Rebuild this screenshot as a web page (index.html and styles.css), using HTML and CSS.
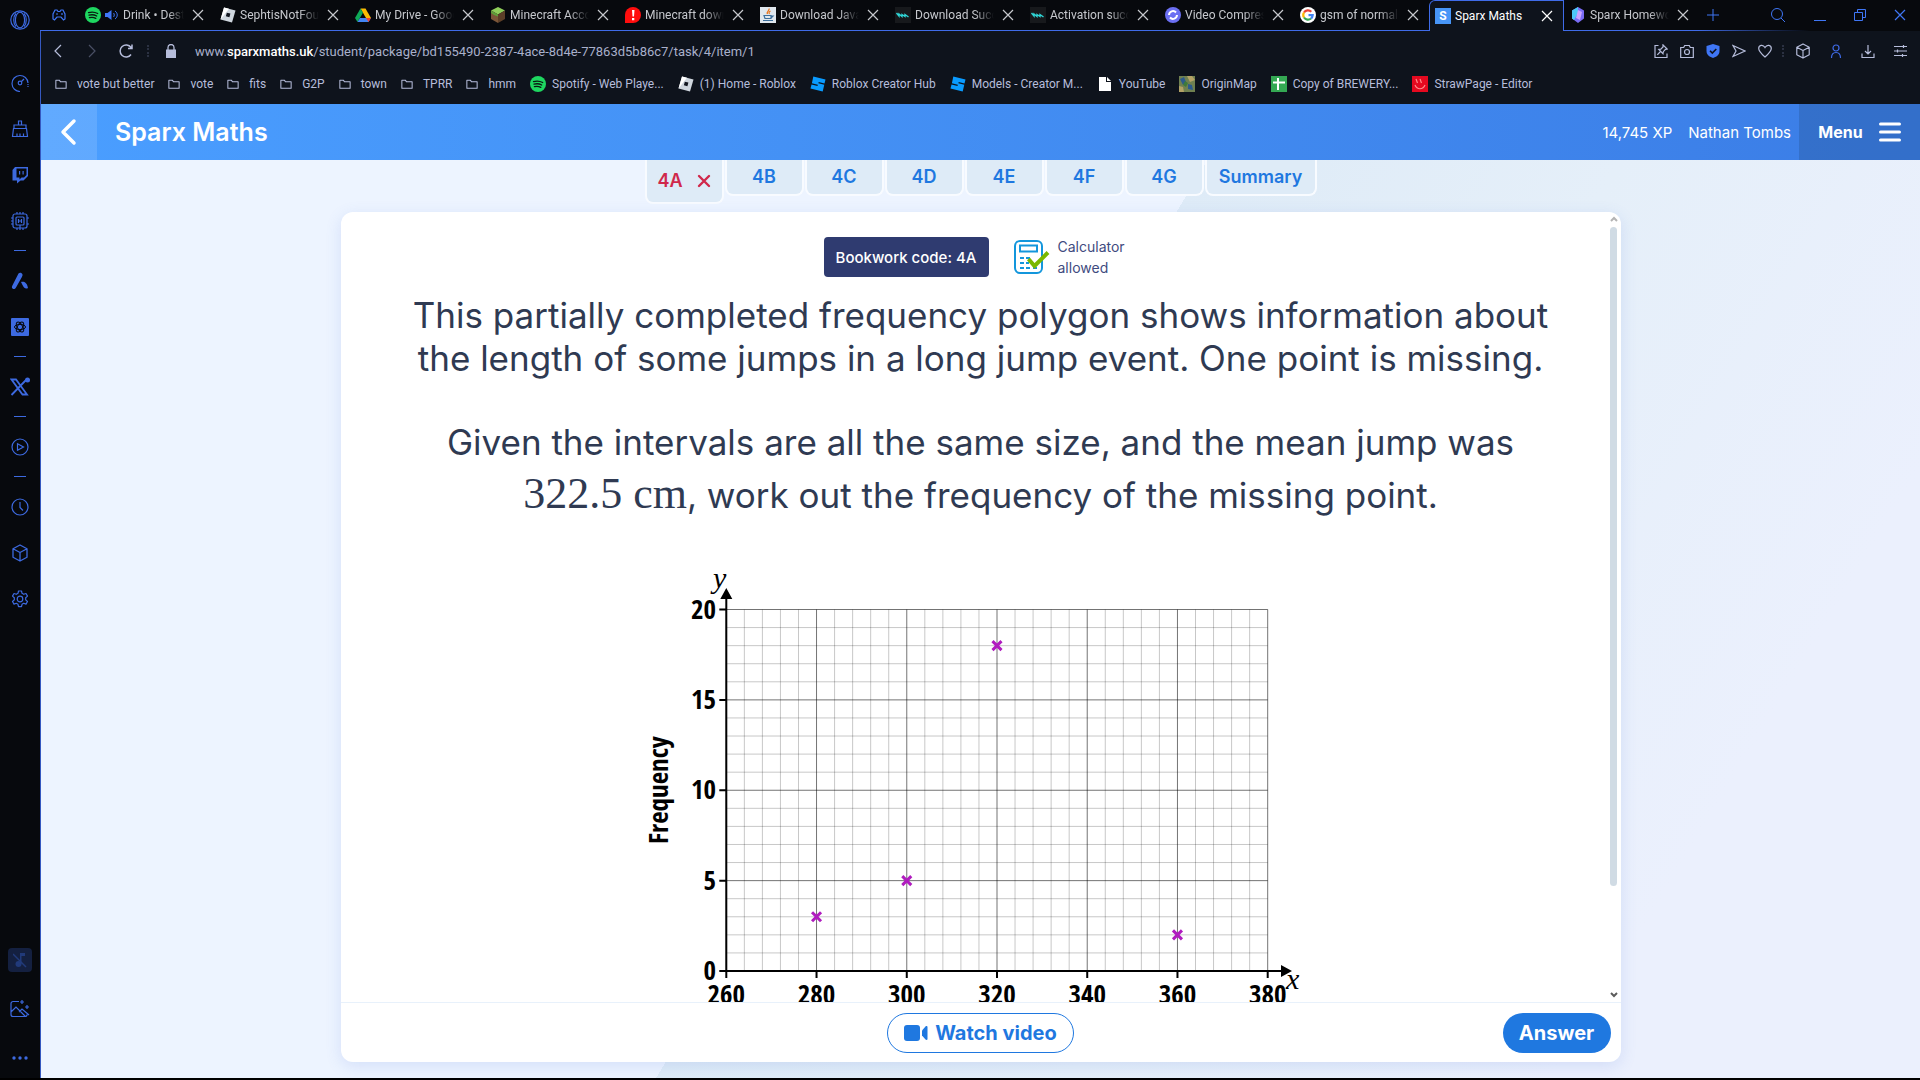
FILE: index.html
```html
<!DOCTYPE html>
<html lang="en">
<head>
<meta charset="UTF-8">
<meta name="viewport" content="width=device-width, initial-scale=1.0">
<title>Sparx Maths</title>
<link rel="stylesheet" href="styles.css">
</head>
<body>

<!-- shared icons -->
<svg class="defs" width="0" height="0">
  <symbol id="close" viewBox="0 0 12 12"><path d="M1 1l10 10M11 1L1 11" fill="none" stroke="currentColor" stroke-width="1.2"/></symbol>
  <symbol id="folder" viewBox="0 0 14 12"><path d="M1 1.500h4l1.500 2h6.500v7.500h-12z" fill="none" stroke="currentColor" stroke-width="1.200" stroke-linejoin="round"/></symbol>
  <symbol id="spotify" viewBox="0 0 16 16"><circle cx="8" cy="8" r="8" fill="#1ed760"/><path d="M3.500 5.600c3-.9 6.500-.6 9.200.9M4 8.200c2.600-.8 5.400-.5 7.700.8M4.400 10.700c2.200-.6 4.500-.4 6.400.7" fill="none" stroke="#0a1a10" stroke-width="1.300" stroke-linecap="round"/></symbol>
  <symbol id="roblox" viewBox="0 0 16 16"><path d="M4 0.500L15.500 3.500 12 15.500 0.500 12.500z" fill="#cfd6de"/><path d="M0.500 12.500L4 .5l5 1.300z" fill="#fff"/><path d="M6.800 5.700l3.600.9-1 3.600-3.500-.9z" fill="#12161f"/></symbol>
  <symbol id="creator" viewBox="0 0 16 16"><path d="M3.300 0.500L15.500 3.500l-1 4-5.800-1.500-.3 1.200 5.900 1.600-1.600 6.700L.5 12.500l1-4 6 1.500.3-1.200-5.900-1.600z" fill="#0a9bff"/></symbol>
  <symbol id="gamemaker" viewBox="0 0 16 16"><rect width="16" height="16" fill="#17191c"/><path d="M1.500 6l2.500 3v-2l3 2.500v-2l3 2v-2l3.500 2.500" fill="none" stroke="#2fd6d6" stroke-width="1.400"/></symbol>
  <symbol id="cube" viewBox="0 0 18 18"><path d="M9 1l7 3.800v8.400L9 17l-7-3.800V4.800zM2 4.800l7 3.700 7-3.700M9 8.500V17" fill="none" stroke="currentColor" stroke-width="1.300" stroke-linejoin="round"/></symbol>
</svg>

<div class="window">
  <aside class="sidebar">
    <button class="opera" aria-label="Opera menu"><svg width="20" height="20" viewBox="0 0 20 20"><circle cx="10" cy="10" r="9.200"/><ellipse cx="10" cy="10" rx="4.600" ry="7.800"/><path d="M6 3.500c-3 3-3 10 0 13M14 3.500c3 3 3 10 0 13"/></svg></button>
    <nav class="tools">
      <button aria-label="GX Control"><svg width="18" height="18" viewBox="0 0 18 18"><path d="M9 17.500A8 8 0 1 1 17 9"/><circle cx="9" cy="9" r="1.800"/><path d="M10.500 7.500l2.500-2.500"/><path d="M17 10v4" stroke-dasharray="1 1"/></svg></button>
      <button aria-label="GX Cleaner"><svg width="18" height="18" viewBox="0 0 18 18"><path d="M3 8V5h12v3M7.500 5V1h3v4M2.500 8.500h13l1 8h-15zM6 16.500v-3M9 16.500v-3M12.500 16.500v-3"/></svg></button>
      <button aria-label="Twitch"><svg width="18" height="18" viewBox="0 0 18 18"><path class="solid" fill-rule="evenodd" d="M4 1h13v9l-4.500 4.500H9.500L6 17.500v-3H1.500V4zM5.500 2.500v9h3v2l2-2h2.500L15.500 9V2.500zM8 5h1.200v3.500H8zM11.500 5h1.200v3.500h-1.200z"/></svg></button>
      <button aria-label="GX Mods"><svg width="18" height="18" viewBox="0 0 18 18"><rect x="2" y="2" width="14" height="14" rx="2"/><rect x="5" y="5" width="8" height="8" rx="1"/><path d="M7.500 7v4M10.500 7v4M7.500 9h3M6 2V0M9 2V0M12 2V0M6 18v-2M9 18v-5M12 18v-2M0 6h2M0 9h2M0 12h2M18 6h-2M18 12h-2"/></svg></button>
      <i class="dash"></i>
      <button aria-label="Aria"><svg width="18" height="18" viewBox="0 0 18 18"><path class="solid" d="M7.500 1.500C8.500.3 11 .5 11.500 2.500c.2 1-.2 1.700-.6 2.400L5 15.500c-.9 1.600-2.500 2-3.500 1-.9-.8-.7-2 0-3.200zM10 10c2.500-1 6 0 7 6-2.500 1.500-4.500-.5-5.500-3z"/></svg></button>
      <button aria-label="ChatGPT"><svg width="18" height="18" viewBox="0 0 18 18"><rect class="solid" width="18" height="18" rx="1"/><g class="cut"><ellipse cx="9" cy="9" rx="5.500" ry="2.600"/><ellipse cx="9" cy="9" rx="5.500" ry="2.600" transform="rotate(60 9 9)"/><ellipse cx="9" cy="9" rx="5.500" ry="2.600" transform="rotate(120 9 9)"/></g></svg></button>
      <i class="dash"></i>
      <button aria-label="X"><svg width="20" height="20" viewBox="0 0 20 20"><path d="M1.500 2.500h4.500l11 15h-4.500zM16 3L1.500 18" stroke-width="1.800"/><circle class="solid" cx="17.500" cy="3" r="2.500"/></svg></button>
      <i class="dash"></i>
      <button aria-label="Player"><svg width="18" height="18" viewBox="0 0 18 18"><circle cx="9" cy="9" r="8"/><path d="M6.500 5.700l6 3.300-6 3.300z"/></svg></button>
      <i class="dash"></i>
      <button aria-label="History"><svg width="18" height="18" viewBox="0 0 18 18"><circle cx="9" cy="9" r="8"/><path d="M9 4v5.500l3 3"/></svg></button>
      <button aria-label="Extensions"><svg width="18" height="18"><use href="#cube"/></svg></button>
      <button aria-label="Settings"><svg width="18" height="18" viewBox="0 0 18 18"><circle cx="9" cy="9" r="2.800"/><path d="M7.500 1h3l.5 2.300 1.700 1 2.300-.8 1.500 2.600-1.800 1.600v2.200l1.800 1.600-1.500 2.600-2.300-.8-1.700 1-.5 2.300h-3L7 14.300l-1.700-1-2.300.8-1.500-2.600 1.800-1.600V7.700L1.500 6.100 3 3.500l2.300.8 1.700-1z" stroke-linejoin="round"/></svg></button>
    </nav>
    <div class="tools-bottom">
      <button class="muted" aria-label="Music off"><svg width="14" height="16" viewBox="0 0 14 16"><circle class="solid" cx="5.500" cy="12" r="3"/><path class="solid" d="M7 1h5v3H8.500v8H7z"/><path d="M0 2l13 13" stroke-width="1.500"/></svg></button>
      <button aria-label="Image tools"><svg width="20" height="18" viewBox="0 0 20 18"><path d="M9 1.500H3a2 2 0 0 0-2 2v11a2 2 0 0 0 2 2h12a2 2 0 0 0 2-2M1 12l5-5 9 9M9 12l3-3 7 6M12 0v4M10 2h4M17 5v4M15 7h4"/></svg></button>
      <button aria-label="More"><svg width="16" height="4" viewBox="0 0 16 4"><g class="solid"><circle cx="2" cy="2" r="1.700"/><circle cx="8" cy="2" r="1.700"/><circle cx="14" cy="2" r="1.700"/></g></svg></button>
    </div>
  </aside>

  <div class="browser">
    <div class="tabstrip">
      <button class="corner" aria-label="GX Corner"><svg width="14" height="12" viewBox="0 0 14 12" fill="none" stroke="currentColor" stroke-width="1.200"><path d="M3 1h2l1 1.500h2L9 1h2l2 4v5l-1.500 1L9 8H5l-2.500 3L1 10V5z"/><path d="M4 5h2M10 4v2"/></svg></button>
      <div class="tab">
        <svg class="favicon"><use href="#spotify"/></svg>
        <svg class="audio" width="14" height="12" viewBox="0 0 14 12"><path d="M0 4h2.500L6.500 1v10L2.500 8H0z" fill="#3f76f5"/><path d="M8.500 4c1 1 1 3 0 4M10 2c3 2 3 6 0 8" fill="none" stroke="#3f76f5"/></svg>
        <span class="title">Drink • Destiny</span><button class="x" aria-label="Close"><svg><use href="#close"/></svg></button>
      </div>
      <div class="tab"><svg class="favicon"><use href="#roblox"/></svg><span class="title">SephtisNotFound</span><button class="x" aria-label="Close"><svg><use href="#close"/></svg></button></div>
      <div class="tab"><svg class="favicon" viewBox="0 0 16 16"><path d="M5.500 1.500h5L16 11h-5z" fill="#fbbc04"/><path d="M5.500 1.500L0 11l2.500 4L8 5.700z" fill="#0fa958"/><path d="M5 11h11l-2.500 4h-11z" fill="#4285f4"/><path d="M11 11h5l-2.500 4z" fill="#ea4335"/></svg><span class="title">My Drive - Google</span><button class="x" aria-label="Close"><svg><use href="#close"/></svg></button></div>
      <div class="tab"><svg class="favicon" viewBox="0 0 16 16"><path d="M8 0l7 3.500-7 4-7-4z" fill="#8fce5a"/><path d="M1 3.500l7 4V16l-7-4z" fill="#7b5638"/><path d="M15 3.500l-7 4V16l7-4z" fill="#5d3f28"/><path d="M1 3.500l7 4v2L4 8 1 6z" fill="#5f9e3a"/></svg><span class="title">Minecraft Account</span><button class="x" aria-label="Close"><svg><use href="#close"/></svg></button></div>
      <div class="tab"><svg class="favicon" viewBox="0 0 16 16"><path d="M8 0a8 8 0 1 1 0 16H0V8a8 8 0 0 1 8-8z" fill="#ff0d0d"/><path d="M7 3h2.500L9 9.500H7.500zM7 11h2.300v2.200H7z" fill="#fff"/></svg><span class="title">Minecraft download</span><button class="x" aria-label="Close"><svg><use href="#close"/></svg></button></div>
      <div class="tab"><svg class="favicon" viewBox="0 0 16 16"><rect width="16" height="16" fill="#dfe7ee"/><path d="M9 1.500c1 2-3 3-1.500 5.500M10.500 4c-1.500.8-2 1.500-1 3" fill="none" stroke="#e8731a" stroke-width="1.200"/><path d="M4 8.500h7v3H5zM11 9h2l-2 2M3 13.500h10" fill="none" stroke="#3c6f9c" stroke-width="1.200"/></svg><span class="title">Download Java for</span><button class="x" aria-label="Close"><svg><use href="#close"/></svg></button></div>
      <div class="tab"><svg class="favicon"><use href="#gamemaker"/></svg><span class="title">Download Success</span><button class="x" aria-label="Close"><svg><use href="#close"/></svg></button></div>
      <div class="tab"><svg class="favicon"><use href="#gamemaker"/></svg><span class="title">Activation successful</span><button class="x" aria-label="Close"><svg><use href="#close"/></svg></button></div>
      <div class="tab"><svg class="favicon" viewBox="0 0 16 16"><circle cx="8" cy="8" r="8" fill="#6b6ff2"/><path d="M4 8a4 4 0 0 1 7-2.500M12 8a4 4 0 0 1-7 2.500" fill="none" stroke="#fff" stroke-width="2"/></svg><span class="title">Video Compressor</span><button class="x" aria-label="Close"><svg><use href="#close"/></svg></button></div>
      <div class="tab"><svg class="favicon" viewBox="0 0 16 16"><circle cx="8" cy="8" r="8" fill="#fff"/><g fill="none" stroke-width="2.200"><path d="M4 5.500A4.700 4.700 0 0 1 11.300 4.700" stroke="#ea4335"/><path d="M4 5.500a4.700 4.700 0 0 0 0 5" stroke="#fbbc04"/><path d="M4 10.500a4.700 4.700 0 0 0 7 1" stroke="#34a853"/><path d="M11 11.500A4.700 4.700 0 0 0 12.700 8.200H8.500" stroke="#4285f4"/></g></svg><span class="title">gsm of normal a4</span><button class="x" aria-label="Close"><svg><use href="#close"/></svg></button></div>
      <div class="tab active"><svg class="favicon" viewBox="0 0 16 16"><rect width="16" height="16" fill="#4795f7"/><text x="8" y="12" text-anchor="middle" class="favicon-letter">S</text></svg><span class="title">Sparx Maths</span><button class="x" aria-label="Close"><svg><use href="#close"/></svg></button></div>
      <div class="tab"><svg class="favicon" viewBox="0 0 16 16"><path d="M8 0l6 3.500v8L8 16l-6-4.500v-8z" fill="#7a6cf5"/><path d="M2 3.500L8 0v6L4 13l-2-1.500z" fill="#4cc9f7"/><path d="M8 3l4 2-2 8-4-2z" fill="#c9a5ff"/></svg><span class="title">Sparx Homework</span><button class="x" aria-label="Close"><svg><use href="#close"/></svg></button></div>
      <div class="strip-end">
        <button aria-label="New tab"><svg width="12" height="12" viewBox="0 0 12 12"><path d="M6 0v12M0 6h12"/></svg></button>
        <div class="window-buttons">
          <button aria-label="Search tabs"><svg width="16" height="16" viewBox="0 0 16 16"><circle cx="7" cy="7" r="5.500"/><path d="M11 11l4 4"/></svg></button>
          <button aria-label="Minimise"><svg width="12" height="12" viewBox="0 0 12 12"><path d="M0 11.500h12"/></svg></button>
          <button aria-label="Restore"><svg width="12" height="12" viewBox="0 0 12 12"><path d="M.5 3.500h8v8h-8zM3.500 3.500v-3h8v8h-3"/></svg></button>
          <button aria-label="Close window"><svg width="12" height="12"><use href="#close"/></svg></button>
        </div>
      </div>
    </div>

    <div class="view">
      <div class="address-bar">
        <button aria-label="Back"><svg width="8" height="14" viewBox="0 0 8 14"><path d="M7 1L1 7l6 6"/></svg></button>
        <button class="off" aria-label="Forward"><svg width="8" height="14" viewBox="0 0 8 14"><path d="M1 1l6 6-6 6"/></svg></button>
        <button aria-label="Reload"><svg width="14" height="14" viewBox="0 0 14 14"><path d="M12 10.500A6 6 0 1 1 12 3.500M13 .5V4.500H9" stroke-width="1.500"/></svg></button>
        <i class="grip"></i>
        <svg class="lock" width="10" height="14" viewBox="0 0 10 14"><path d="M0 6h10v8H0z" fill="#b6bddb"/><path d="M2 6V3.500a3 3 0 0 1 6 0V6" fill="none" stroke="#b6bddb" stroke-width="1.300"/></svg>
        <span class="url">www.<b>sparxmaths.uk</b>/student/package/bd155490-2387-4ace-8d4e-77863d5b86c7/task/4/item/1</span>
        <div class="page-actions">
          <button aria-label="Pin"><svg width="14" height="14" viewBox="0 0 14 14"><path d="M4.500 1.500H1v12h12V9.500M9 .8l4.200 4.200-1.700.4-2.200 2.300-.3 2L4.800 5.500l2-.3L9 2.900zM6.500 7.500l-3.200 3.300"/></svg></button>
          <button aria-label="Snapshot"><svg width="14" height="14" viewBox="0 0 14 14"><path d="M.7 3.500h3l1-2h4.600l1 2h3v10H.7z"/><circle cx="7" cy="8" r="2.500"/></svg></button>
          <button aria-label="Ad blocker"><svg width="14" height="14" viewBox="0 0 14 14"><path d="M7 0l6.500 2v5c0 4-3.500 6-6.500 7C4 13 .5 11 .5 7V2z" fill="#3f76f5" stroke="none"/><path d="M4 6.800l2.300 2.300L10.300 5" stroke="#0e131c" stroke-width="1.600"/></svg></button>
          <button aria-label="Flow"><svg width="14" height="14" viewBox="0 0 14 14"><path d="M1 1.500l12 5.500-12 5.500L4 7z"/></svg></button>
          <button aria-label="Bookmark"><svg width="14" height="14" viewBox="0 0 14 14"><path d="M7 13C3 9.500.7 7.500.7 4.500 .7 1 5 0 7 3.500 9 0 13.300 1 13.300 4.500c0 3-2.300 5-6.300 8.500z"/></svg></button>
        </div>
        <i class="grip"></i>
        <div class="toolbar-end">
          <button aria-label="Extensions"><svg width="16" height="16"><use href="#cube"/></svg></button>
          <button class="blue" aria-label="Profile"><svg width="12" height="14" viewBox="0 0 12 14"><circle cx="6" cy="4" r="3"/><path d="M1.500 14c0-4 2-5.500 4.500-5.500s4.500 1.500 4.500 5.500"/></svg></button>
          <button aria-label="Downloads"><svg width="14" height="14" viewBox="0 0 14 14"><path d="M7 1v9M4 7l3 3 3-3M1 9.500v4h12v-4"/></svg></button>
          <button aria-label="Easy setup"><svg width="14" height="12" viewBox="0 0 14 12"><path d="M0 1.500h13M0 6h13M0 10.500h13M9.500 0v3M3.500 4.500v3M8.500 9v3"/></svg></button>
        </div>
      </div>

      <nav class="bookmarks">
        <a href="#"><svg class="folder"><use href="#folder"/></svg>vote but better</a>
        <a href="#"><svg class="folder"><use href="#folder"/></svg>vote</a>
        <a href="#"><svg class="folder"><use href="#folder"/></svg>fits</a>
        <a href="#"><svg class="folder"><use href="#folder"/></svg>G2P</a>
        <a href="#"><svg class="folder"><use href="#folder"/></svg>town</a>
        <a href="#"><svg class="folder"><use href="#folder"/></svg>TPRR</a>
        <a href="#"><svg class="folder"><use href="#folder"/></svg>hmm</a>
        <a href="#"><svg class="favicon"><use href="#spotify"/></svg>Spotify - Web Playe...</a>
        <a href="#"><svg class="favicon"><use href="#roblox"/></svg>(1) Home - Roblox</a>
        <a href="#"><svg class="favicon"><use href="#creator"/></svg>Roblox Creator Hub</a>
        <a href="#"><svg class="favicon"><use href="#creator"/></svg>Models - Creator M...</a>
        <a href="#"><svg class="favicon" viewBox="0 0 16 16"><path d="M2 1h7v5h5v9H2z" fill="#fff"/><path d="M10 1l4 4h-4z" fill="#fff"/></svg>YouTube</a>
        <a href="#"><svg class="favicon" viewBox="0 0 16 16"><rect width="16" height="16" fill="#6f8050"/><path d="M1 3l4-2 2 5-3 3zM9 8l4 1 1 5-5-1z" fill="#2c5a8c"/><path d="M8 0h5l3 4-5 2zM0 10l4 1 1 5H0z" fill="#b3a266"/><path d="M6 5l3 2-2 4-3-2z" fill="#3e7a3a"/></svg>OriginMap</a>
        <a href="#"><svg class="favicon" viewBox="0 0 16 16"><rect width="16" height="16" fill="#34a853"/><path d="M2 6.500h12M7 2v12" fill="none" stroke="#fff" stroke-width="2"/></svg>Copy of BREWERY...</a>
        <a href="#"><svg class="favicon" viewBox="0 0 16 16"><rect width="16" height="16" fill="#e5091f"/><path d="M4 3l1.500 4M8 3l1.500 4M3 9c2 5 8 5 10 0" fill="none" stroke="#ff8b8b" stroke-width="1.200"/></svg>StrawPage - Editor</a>
      </nav>

      <header class="app-header">
        <button class="back" aria-label="Back"><svg width="18" height="28" viewBox="0 0 18 28"><path d="M14 3L3 14l11 11" fill="none" stroke="#fff" stroke-width="3.500" stroke-linecap="round" stroke-linejoin="round"/></svg></button>
        <h1>Sparx Maths</h1>
        <span class="xp">14,745 XP</span>
        <span class="user">Nathan Tombs</span>
        <button class="menu">Menu <svg width="22" height="20" viewBox="0 0 22 20"><path d="M1.500 2h19M1.500 10h19M1.500 18h19" stroke="#fff" stroke-width="3" stroke-linecap="round"/></svg></button>
      </header>

      <main class="page">
        <nav class="task-items">
          <a href="#" class="wrong">4A <svg width="14" height="14" viewBox="0 0 14 14"><path d="M2 2l10 10M12 2L2 12" stroke="#d0284b" stroke-width="2.400" stroke-linecap="round"/></svg></a>
          <a href="#">4B</a>
          <a href="#">4C</a>
          <a href="#">4D</a>
          <a href="#">4E</a>
          <a href="#">4F</a>
          <a href="#">4G</a>
          <a href="#" class="summary">Summary</a>
        </nav>

        <section class="card">
          <div class="question">
            <div class="info">
              <button class="bookwork">Bookwork code: 4A</button>
              <div class="calculator">
                <svg width="36" height="34" viewBox="0 0 36 34"><rect x="1" y="1" width="27" height="32" rx="5" fill="none" stroke="#1396dc" stroke-width="2"/><rect x="6" y="5.500" width="17" height="6" fill="none" stroke="#1396dc" stroke-width="2"/><path d="M6 18h4M12 18h4M6 23h4M12 23h3M6 28h4M12 28h4M19 28h4" stroke="#1396dc" stroke-width="2"/><path d="M14.500 19l6 7L34 12.500" fill="none" stroke="#7ab800" stroke-width="4"/></svg>
                <span>Calculator<br>allowed</span>
              </div>
            </div>
            <p>This partially completed frequency polygon shows information about<br>the length of some jumps in a long jump event. One point is missing.</p>
            <p class="given">Given the intervals are all the same size, and the mean jump was<br><span class="math">322.5 cm</span>, work out the frequency of the missing point.</p>
            <svg class="chart" id="chart" width="680" height="460" viewBox="0 0 680 460"></svg>
          </div>
          <div class="scrollbar">
            <svg width="8" height="6" viewBox="0 0 8 6"><path d="M1 5l3-3 3 3" fill="none" stroke="#b4b4b4" stroke-width="2"/></svg>
            <i class="thumb"></i>
            <svg width="8" height="6" viewBox="0 0 8 6"><path d="M1 1l3 3 3-3" fill="none" stroke="#5c5c5c" stroke-width="2"/></svg>
          </div>
          <footer>
            <button class="watch"><svg width="24" height="18" viewBox="0 0 24 18"><rect x="0" y="1" width="16" height="16" rx="3" fill="#1f78e0"/><path d="M18 6.500L21.500 2.500c1-.8 2-.5 2 .5v12c0 1-1 1.300-2 .5L18 11.500z" fill="#1f78e0"/></svg>Watch video</button>
            <button class="answer">Answer</button>
          </footer>
        </section>
      </main>
    </div>
  </div>
</div>

<script>
const points = [[280, 3], [300, 5], [320, 18], [360, 2]];
const left = 85.3, right = 626.7, top_ = 49.5, bottom = 411;

const px = x => left + (x - 260) / 120 * (right - left);
const py = y => bottom - y / 20 * (bottom - top_);

let minor = "", major = "", ticks = "", labels = "";

for (let x = 260; x <= 380; x += 4) {
  const d = `M${px(x)} ${top_}V${bottom}`;
  if (x % 20 == 0) major += d; else minor += d;
}
for (let y = 0; y <= 20; y++) {
  const d = `M${left} ${py(y)}H${right}`;
  if (y % 5 == 0) major += d; else minor += d;
}
for (let x = 260; x <= 380; x += 20) {
  ticks += `M${px(x)} ${bottom}v7`;
  labels += `<text x="${px(x)}" y="444" text-anchor="middle">${x}</text>`;
}
for (let y = 0; y <= 20; y += 5) {
  ticks += `M${left} ${py(y)}h-7`;
  labels += `<text x="75" y="${py(y) + 9}" text-anchor="end">${y}</text>`;
}

const crosses = points.map(([x, y]) => `M${px(x) - 4.5} ${py(y) - 4.5}l9 9m0 -9l-9 9`).join("");

document.getElementById("chart").innerHTML = `
  <path class="minor" d="${minor}"/>
  <path class="major" d="${major}"/>
  <path class="axis" d="M${left} ${bottom}V36M${left} ${bottom}H642${ticks}"/>
  <path d="M${left - 6} 39h12l-6 -11zM640 ${bottom - 6}v12l11 -6z"/>
  <path class="cross" d="${crosses}"/>
  ${labels}
  <text transform="translate(27 284) rotate(-90)">Frequency</text>
  <text class="var" x="72" y="28">y</text>
  <text class="var" x="645" y="429">x</text>`;
</script>
</body>
</html>
```

FILE: styles.css
```css
* {
  box-sizing: border-box;
}

body {
  margin: 0;
  background-color: #000;
  font-family: Inter, "Open Sans", sans-serif;
}

button {
  display: flex;
  align-items: center;
  justify-content: center;
  padding: 0;
  border: none;
  background: none;
  color: inherit;
  font-family: inherit;
  cursor: pointer;
}

a {
  text-decoration: none;
}

.defs {
  position: absolute;
}

.window {
  display: flex;
  height: 100vh;
  border-bottom: 2px solid #000;
  background-color: #07090d;
}

/* sidebar */
.sidebar {
  display: flex;
  flex-direction: column;
  flex: none;
  width: 40px;
  color: #3d6ae0;
}

.sidebar svg {
  fill: none;
  stroke: currentColor;
  stroke-width: 1.2;
}

.sidebar .solid {
  fill: currentColor;
  stroke: none;
}

.sidebar .cut {
  stroke: #07090d;
  stroke-width: 1;
}

.opera {
  height: 40px;
  margin-bottom: 20px;
}

.tools button {
  width: 40px;
  height: 46px;
}

.dash {
  display: block;
  width: 12px;
  height: 1px;
  margin: 6px 14px 7px;
  background-color: currentColor;
}

.tools-bottom {
  display: flex;
  flex-direction: column;
  gap: 9px;
  margin-top: auto;
}

.tools-bottom button {
  height: 40px;
}

.tools-bottom .muted {
  height: 24px;
  width: 24px;
  margin: 8px;
  border-radius: 4px;
  background-color: #142040;
  color: #213a7a;
}

/* tabs */
.browser {
  display: flex;
  flex-direction: column;
  flex: 1;
  min-width: 0;
}

.tabstrip {
  display: flex;
  flex: none;
  height: 31px;
  color: #3f76f5;
}

.corner {
  flex: none;
  width: 39px;
  padding-right: 2px;
  border-bottom: 1px solid #3f6be8;
}

.tab {
  display: flex;
  align-items: center;
  flex: none;
  width: 135px;
  padding: 0 10px 0 6px;
  border-bottom: 1px solid #3f6be8;
  color: #c6c8cd;
  font-family: Roboto, sans-serif;
  font-size: 12px;
}

.favicon {
  flex: none;
  width: 16px;
  height: 16px;
}

.favicon-letter {
  fill: #fff;
  font-size: 12px;
  font-weight: 700;
}

.audio {
  flex: none;
  margin-left: 4px;
}

.title {
  flex: 1;
  margin-left: 4px;
  margin-right: 8px;
  overflow: hidden;
  white-space: nowrap;
  mask-image: linear-gradient(to right, #000 75%, transparent);
}

.x svg {
  width: 12px;
  height: 12px;
}

.tab.active {
  border: 1px solid #3f6be8;
  border-bottom: none;
  border-radius: 6px 0 0 0;
  padding-left: 5px;
  background-color: #0e131c;
  color: #fff;
}

.active .title {
  mask-image: none;
}

.strip-end {
  display: flex;
  align-items: center;
  justify-content: space-between;
  flex: 1;
  padding: 0 14px 0 8px;
  border-bottom: 1px solid;
  border-image: linear-gradient(to right, #3f6be8, transparent 50%) 1;
}

.strip-end svg {
  fill: none;
  stroke: currentColor;
}

.window-buttons {
  display: flex;
  align-items: center;
  gap: 28px;
}

/* toolbar */
.view {
  display: flex;
  flex-direction: column;
  flex: 1;
  min-height: 0;
  border-left: 1px solid #3558c0;
  background-color: #0e131c;
}

.address-bar {
  display: flex;
  align-items: center;
  height: 40px;
  padding: 0 12px 0 4px;
  color: #b6bddb;
}

.address-bar svg {
  fill: none;
  stroke: currentColor;
  stroke-width: 1.2;
}

.address-bar > button {
  width: 26px;
  margin-right: 8px;
}

.address-bar .off {
  color: #4a5065;
}

.grip {
  width: 2px;
  height: 12px;
  border-left: 2px dotted #2b3142;
}

.lock {
  margin: 0 19px 0 17px;
}

.url {
  flex: 1;
  font-family: Roboto, sans-serif;
  font-size: 13px;
  color: #a9b0cb;
}

.url b {
  font-weight: 500;
  color: #fff;
}

.page-actions {
  display: flex;
  gap: 12px;
  margin-right: 10px;
}

.toolbar-end {
  display: flex;
  align-items: center;
  gap: 19px;
  margin-left: 11px;
}

.blue {
  color: #3f6be8;
}

.bookmarks {
  display: flex;
  align-items: center;
  gap: 14px;
  height: 33px;
  padding: 0 14px 8px;
  font-family: Roboto, sans-serif;
  font-size: 12px;
}

.bookmarks a {
  display: flex;
  align-items: center;
  gap: 6px;
  color: #b6bddb;
  white-space: nowrap;
}

.folder {
  width: 12px;
  height: 12px;
  margin-right: 4px;
}

/* app header */
.app-header {
  display: flex;
  align-items: center;
  flex: none;
  height: 56px;
  background: linear-gradient(to right, #4a9eff, #3b7de6);
  color: #fff;
  font-size: 15px;
}

.back {
  width: 56px;
  height: 56px;
  background-color: rgba(255, 255, 255, 0.13);
}

.app-header h1 {
  flex: 1;
  margin: 0 0 0 18px;
  font-size: 25px;
  font-weight: 600;
}

.user {
  margin: 0 8px 0 16px;
}

.menu {
  gap: 16px;
  width: 121px;
  height: 56px;
  background-color: rgba(40, 90, 160, 0.4);
  font-size: 16px;
  font-weight: 700;
}

/* task page */
.page {
  display: flex;
  flex-direction: column;
  align-items: center;
  flex: 1;
  min-height: 0;
  padding-bottom: 16px;
  background: linear-gradient(121deg, #edf4ff 48%, #deebf7 48%, #e5eff9 65%, #ebf0fd 85%);
}

.task-items {
  display: flex;
  align-items: flex-start;
  gap: 1px;
  height: 52px;
}

.task-items a {
  width: 79px;
  height: 36px;
  border: 2px solid #f8fbff;
  border-top: none;
  border-radius: 0 0 8px 8px;
  background-color: #deebf7;
  color: #1f78e0;
  font-size: 18px;
  font-weight: 600;
  line-height: 34px;
  text-align: center;
}

.task-items .wrong {
  display: flex;
  align-items: center;
  justify-content: center;
  gap: 14px;
  height: 44px;
  color: #d0284b;
}

.task-items .summary {
  width: 112px;
}

.card {
  position: relative;
  display: flex;
  flex-direction: column;
  flex: 1;
  width: 1280px;
  max-width: 100%;
  min-height: 0;
  border-radius: 12px;
  background-color: #fff;
  box-shadow: 0 4px 16px rgba(80, 120, 220, 0.16);
}

.question {
  flex: 1;
  min-height: 0;
  overflow: hidden;
  padding-top: 24px;
  color: #2f3a52;
  text-align: center;
}

.info {
  display: flex;
  align-items: center;
  justify-content: center;
  gap: 25px;
  margin-bottom: 16px;
}

.bookwork {
  width: 165px;
  height: 40px;
  border-radius: 4px;
  background-color: #2f3b70;
  color: #fff;
  font-size: 15px;
  font-weight: 500;
}

.calculator {
  display: flex;
  align-items: center;
  gap: 8px;
  color: #3f4b80;
  font-size: 14px;
  line-height: 21px;
  text-align: left;
}

.calculator span {
  width: 80px;
}

.question p {
  margin: 0;
  font-size: 35px;
  line-height: 43px;
}

.question .given {
  margin-top: 36px;
  line-height: 53px;
}

.math {
  font-family: "Liberation Serif", serif;
  font-size: 44px;
  line-height: 1;
}

.chart {
  display: block;
  margin: 38px auto 0;
  font-family: "Open Sans Condensed", "Open Sans", sans-serif;
  font-size: 27px;
  font-weight: 700;
}

.minor {
  stroke: rgba(0, 0, 0, 0.22);
}

.major {
  stroke: rgba(0, 0, 0, 0.55);
}

.axis {
  fill: none;
  stroke: #000;
  stroke-width: 2;
}

.cross {
  fill: none;
  stroke: #b01cbf;
  stroke-width: 3;
}

.var {
  font-family: "Liberation Serif", serif;
  font-size: 30px;
  font-style: italic;
  font-weight: 400;
}

.scrollbar {
  position: absolute;
  top: 4px;
  right: 3px;
  bottom: 64px;
  display: flex;
  flex-direction: column;
  justify-content: space-between;
  align-items: center;
}

.thumb {
  flex: 1;
  width: 7px;
  margin: 5px 0 106px;
  border-radius: 4px;
  background-color: #d0dbe4;
}

.card footer {
  display: grid;
  grid-template-columns: 1fr auto 1fr;
  padding: 10px 10px 9px;
  border-top: 1px solid #e8f1fb;
}

.card footer button {
  height: 40px;
  border-radius: 20px;
  font-size: 20px;
  font-weight: 700;
}

.watch {
  grid-column: 2;
  gap: 7px;
  width: 187px;
  border: 1px solid #1f78e0;
  color: #1f78e0;
}

.answer {
  justify-self: end;
  width: 108px;
  background-color: #1f78e0;
  color: #fff;
}
```
